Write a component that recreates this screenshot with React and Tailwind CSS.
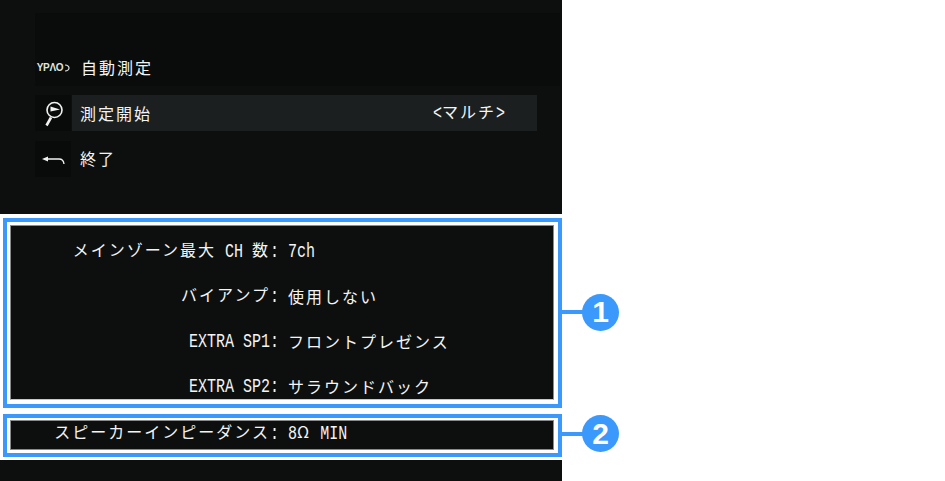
function L({ children }) {
  return (
    <span className="inline-block origin-center scale-y-[1.3] font-['Liberation_Mono',monospace] text-[15px] tracking-normal whitespace-pre">
      {children}
    </span>
  );
}

function J({ children }) {
  return <span className="font-['Noto_Sans_CJK_JP',sans-serif] text-[16px] tracking-[2px] whitespace-pre">{children}</span>;
}

function Info({ label, value }) {
  return (
    <div className="flex h-6 items-center leading-6 text-[#f4f4f4]">
      <div className="w-[277px] shrink-0 text-right whitespace-pre">
        {label}
        <L>{": "}</L>
      </div>
      <div className="whitespace-pre">{value}</div>
    </div>
  );
}

function IconBox({ children }) {
  return <div className="flex h-9 w-9 shrink-0 items-center justify-center bg-[#090b0b]">{children}</div>;
}

function Callout({ n, className }) {
  return (
    <div className={"flex items-center " + className}>
      <div className="-ml-px h-1 w-[22px] bg-[#3b99fb]" />
      <div className="-ml-px flex h-[37px] w-[37px] items-center justify-center rounded-full bg-[#3b99fb] font-['Liberation_Sans',sans-serif] text-[30px] font-bold leading-none text-white">
        {n}
      </div>
    </div>
  );
}

export default function App() {
  return (
    <div className="h-[481px] w-[945px] overflow-hidden bg-white">
      <div className="h-[214px] w-[562px] bg-[#0d0f0f] pl-[35px] pt-[13px] text-[#f4f4f4]">
        <div className="flex h-[73px] w-[525px] items-center bg-[#0a0c0c] pt-[36px]">
          <div className="flex h-9 w-9 shrink-0 items-center justify-center gap-px pl-px">
            <span className="font-['Liberation_Sans',sans-serif] text-[10px] font-bold tracking-[-0.3px] text-[#dfe5df]">YPΛO</span>
            <svg width="6" height="8" viewBox="0 0 6 8" fill="none">
              <path d="M1 1 C4 1 5 3 5 4 C5 5 4 7 1 7" stroke="#dfe5df" strokeWidth="1.2" />
            </svg>
          </div>
          <div className="pl-[10px] leading-6"><J>自動測定</J></div>
        </div>
        <div className="mt-[9px] flex h-9">
          <IconBox>
            <svg width="36" height="36" viewBox="0 0 36 36" fill="none">
              <circle cx="19.5" cy="15" r="7.5" stroke="#f2f2f2" strokeWidth="1.6" />
              <path d="M16 22.5 L11.5 30.5" stroke="#f2f2f2" strokeWidth="2.6" />
              <path d="M15.5 11.5 L25 14.5 L15.5 16.5 Z" fill="#f2f2f2" />
            </svg>
          </IconBox>
          <div className="ml-px flex h-9 w-[465px] items-center justify-between bg-[#1b1f20] pb-px pl-[8px] pr-[32px] leading-6">
            <J>測定開始</J>
            <span className="whitespace-pre">
              <L>{"<"}</L>
              <J>マルチ</J>
              <L>{">"}</L>
            </span>
          </div>
        </div>
        <div className="mt-[10px] flex h-9 items-center">
          <IconBox>
            <svg width="36" height="36" viewBox="0 0 36 36" fill="none">
              <path d="M7 18 L13 15.5 L13 20.5 Z" fill="#f2f2f2" />
              <path d="M12 18 H24 Q28.5 18 29 23" stroke="#f2f2f2" strokeWidth="1.3" />
            </svg>
          </IconBox>
          <div className="ml-px pb-[2px] pl-[8px] leading-6"><J>終了</J></div>
        </div>
      </div>

      <div className="mt-1 flex items-center pl-[3px]">
        <div className="h-[190px] w-[559px] shrink-0 border-4 border-[#3b99fb] bg-white pl-[3px] pt-[3px]">
          <div className="flex h-[175px] w-[544px] flex-col gap-[21px] border border-[#8a8a8a] border-b-[#c8c8c8] bg-[#0d0f0f] pt-[13px]">
            <Info label={<><J>メインゾーン最大</J><L> CH </L><J>数</J></>} value={<L>7ch</L>} />
            <Info label={<J>バイアンプ</J>} value={<J>使用しない</J>} />
            <Info label={<L>EXTRA SP1</L>} value={<J>フロントプレゼンス</J>} />
            <Info label={<L>EXTRA SP2</L>} value={<J>サラウンドバック</J>} />
          </div>
        </div>
        <Callout n="1" className="mb-[2px]" />
      </div>

      <div className="mt-[6px] flex items-center pl-[3px]">
        <div className="h-[43px] w-[559px] shrink-0 border-4 border-[#3b99fb] bg-white pl-[3px] pt-[2px]">
          <div className="h-[30px] w-[544px] border border-[#8a8a8a] bg-[#0d0f0f]">
            <Info label={<J>スピーカーインピーダンス</J>} value={<><L>8</L><J>Ω</J><L> MIN</L></>} />
          </div>
        </div>
        <Callout n="2" className="mb-[4px]" />
      </div>

      <div className="mt-[3px] h-[21px] w-[562px] bg-[#0d0f0f]" />
    </div>
  );
}
